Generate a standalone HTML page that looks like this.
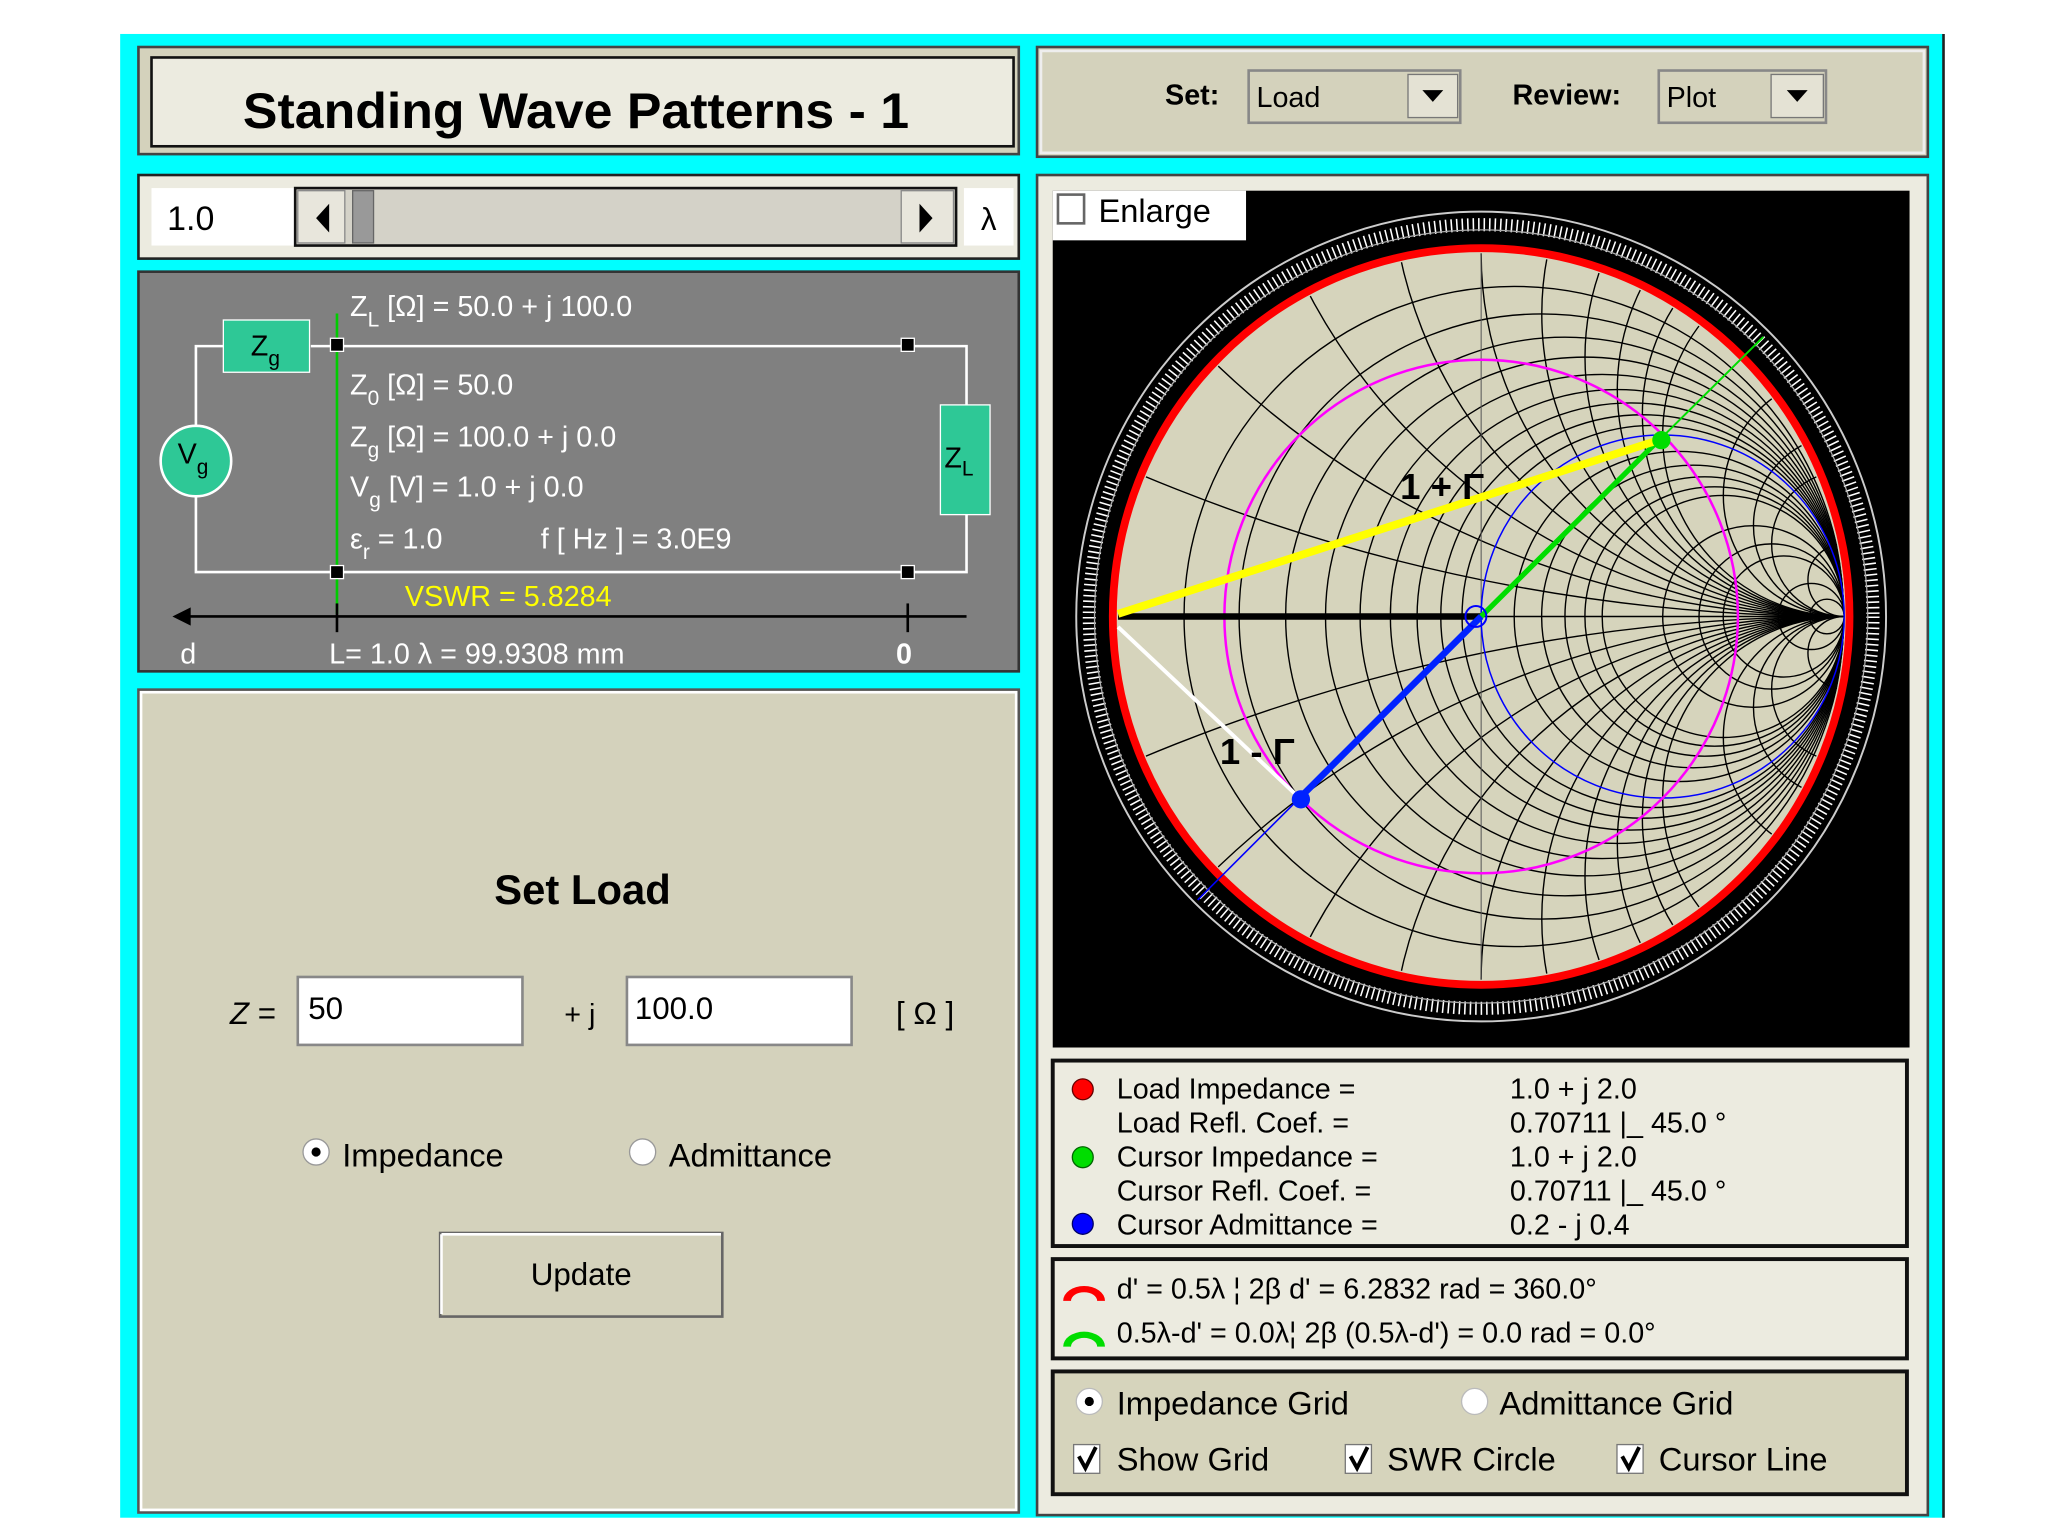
<!DOCTYPE html>
<html><head><meta charset="utf-8"><style>
html,body{margin:0;padding:0;background:#fff;width:2048px;height:1536px;overflow:hidden}
svg{display:block}
text{font-family:"Liberation Sans",sans-serif}
</style></head><body>
<svg width="2048" height="1536" viewBox="0 0 1568 1176" xmlns="http://www.w3.org/2000/svg">
<defs>
<clipPath id="uc"><circle cx="0" cy="0" r="1"/></clipPath>
</defs>
<rect x="0" y="0" width="1568" height="1176" fill="#fff"/>
<rect x="92" y="26" width="1396" height="1136" fill="#00ffff"/>
<line x1="1488" y1="26" x2="1488" y2="1162" stroke="#222" stroke-width="2"/>

<!-- Title panel -->
<rect x="106" y="36" width="674" height="82" fill="#d4d2bc" stroke="#444" stroke-width="2"/>
<rect x="116" y="44" width="660" height="68" fill="#ecebe0" stroke="#111" stroke-width="2"/>
<text x="441" y="98" font-size="38" font-weight="bold" text-anchor="middle" textLength="510" lengthAdjust="spacingAndGlyphs">Standing Wave Patterns - 1</text>

<!-- slider panel -->
<rect x="106" y="134" width="674" height="64" fill="#ecebe0" stroke="#222" stroke-width="2"/>
<rect x="116" y="144" width="110" height="44" fill="#fff"/>
<text x="128" y="176" font-size="26">1.0</text>
<rect x="226" y="144" width="506" height="44" fill="#d4d2c8" stroke="#111" stroke-width="2"/>
<rect x="228" y="146" width="36" height="40" fill="#e8e6dc" stroke="#888"/>
<polygon points="252,156 252,178 242,167" fill="#000"/>
<rect x="270" y="146" width="16" height="40" fill="#999" stroke="#666"/>
<rect x="690" y="146" width="40" height="40" fill="#e8e6dc" stroke="#888"/>
<polygon points="704,156 704,178 714,167" fill="#000"/>
<rect x="738" y="144" width="38" height="44" fill="#fff"/>
<text x="757" y="176" font-size="24" text-anchor="middle">λ</text>

<!-- circuit panel -->
<rect x="106" y="208" width="674" height="306" fill="#808080" stroke="#333" stroke-width="2"/>
<g stroke="#fff" stroke-width="2" fill="none">
<polyline points="171,265 150,265 150,330"/>
<polyline points="150,378 150,438 740,438 740,310"/>
<polyline points="238,265 740,265 740,310"/>
</g>
<line x1="258" y1="240" x2="258" y2="470" stroke="#0c0" stroke-width="2"/>
<rect x="171" y="245" width="66" height="40" fill="#2ec896" stroke="#fff" stroke-width="1"/>
<text x="192" y="272" font-size="22" fill="#000">Z<tspan font-size="16" dy="8">g</tspan></text>
<circle cx="150" cy="353" r="27" fill="#2ec896" stroke="#fff" stroke-width="2"/>
<text x="136" y="355" font-size="22" fill="#000">V<tspan font-size="16" dy="8">g</tspan></text>
<rect x="720" y="310" width="38" height="84" fill="#2ec896" stroke="#fff" stroke-width="1"/>
<text x="723" y="358" font-size="22" fill="#000">Z<tspan font-size="16" dy="6">L</tspan></text>
<g fill="#000" stroke="#fff" stroke-width="1">
<rect x="253" y="259" width="10" height="10"/><rect x="690" y="259" width="10" height="10"/>
<rect x="253" y="433" width="10" height="10"/><rect x="690" y="433" width="10" height="10"/>
</g>
<g fill="#fff" font-size="22">
<text x="268" y="242">Z<tspan font-size="16" dy="8">L</tspan><tspan dy="-8"> [Ω] = 50.0 + j 100.0</tspan></text>
<text x="268" y="302">Z<tspan font-size="16" dy="8">0</tspan><tspan dy="-8"> [Ω] = 50.0</tspan></text>
<text x="268" y="342">Z<tspan font-size="16" dy="8">g</tspan><tspan dy="-8"> [Ω] = 100.0 + j 0.0</tspan></text>
<text x="268" y="380">V<tspan font-size="16" dy="8">g</tspan><tspan dy="-8"> [V] = 1.0 + j 0.0</tspan></text>
<text x="268" y="420">ε<tspan font-size="16" dy="8">r</tspan><tspan dy="-8"> = 1.0</tspan></text>
<text x="414" y="420">f [ Hz ] = 3.0E9</text>
<text x="310" y="464" fill="#ffff00">VSWR  = 5.8284</text>
<text x="138" y="508">d</text>
<text x="252" y="508">L= 1.0  λ  = 99.9308 mm</text>
<text x="686" y="508" font-weight="bold">0</text>
</g>
<line x1="140" y1="472" x2="740" y2="472" stroke="#000" stroke-width="2"/>
<polygon points="132,472 146,465 146,479" fill="#000"/>
<line x1="258" y1="462" x2="258" y2="484" stroke="#000" stroke-width="2"/>
<line x1="695" y1="462" x2="695" y2="484" stroke="#000" stroke-width="2"/>

<!-- Set load panel -->
<rect x="106" y="528" width="674" height="630" fill="#d4d2bc" stroke="#555" stroke-width="2"/>
<rect x="108" y="530" width="670" height="626" fill="none" stroke="#fff" stroke-width="2"/>
<text x="446" y="692" font-size="32" font-weight="bold" text-anchor="middle">Set Load</text>
<text x="176" y="784" font-size="24"><tspan font-style="italic">Z</tspan> =</text>
<rect x="228" y="748" width="172" height="52" fill="#fff" stroke="#888" stroke-width="2"/>
<text x="236" y="780" font-size="24">50</text>
<text x="432" y="784" font-size="22">+ j</text>
<rect x="480" y="748" width="172" height="52" fill="#fff" stroke="#888" stroke-width="2"/>
<text x="486" y="780" font-size="24">100.0</text>
<text x="686" y="784" font-size="24">[ Ω ]</text>
<circle cx="242" cy="882" r="10" fill="#fff" stroke="#999"/><circle cx="242" cy="882" r="3.5" fill="#000"/>
<text x="262" y="893" font-size="25">Impedance</text>
<circle cx="492" cy="882" r="10" fill="#fff" stroke="#999"/>
<text x="512" y="893" font-size="25">Admittance</text>
<rect x="337" y="944" width="216" height="64" fill="#d4d2bc" stroke="#666" stroke-width="2"/>
<line x1="338" y1="945" x2="552" y2="945" stroke="#fff" stroke-width="2"/><line x1="338" y1="945" x2="338" y2="1006" stroke="#fff" stroke-width="2"/>
<text x="445" y="984" font-size="24" text-anchor="middle">Update</text>

<!-- right top panel -->
<rect x="794" y="36" width="682" height="84" fill="#d4d2bc" stroke="#444" stroke-width="2"/>
<rect x="797" y="39" width="676" height="78" fill="none" stroke="#eee" stroke-width="2"/>
<text x="892" y="80" font-size="22" font-weight="bold">Set:</text>
<rect x="956" y="54" width="162" height="40" fill="#d4d2bc" stroke="#888" stroke-width="2"/>
<text x="962" y="82" font-size="22">Load</text>
<rect x="1078" y="57" width="38" height="33" fill="#e4e2d4" stroke="#777"/>
<polygon points="1089,69 1105,69 1097,78" fill="#000"/>
<text x="1158" y="80" font-size="22" font-weight="bold">Review:</text>
<rect x="1270" y="54" width="128" height="40" fill="#d4d2bc" stroke="#888" stroke-width="2"/>
<text x="1276" y="82" font-size="22">Plot</text>
<rect x="1356" y="57" width="40" height="33" fill="#e4e2d4" stroke="#777"/>
<polygon points="1368,69 1384,69 1376,78" fill="#000"/>

<!-- smith panel -->
<rect x="794" y="134" width="682" height="1026" fill="#ecebe0" stroke="#444" stroke-width="2"/>
<rect x="806" y="146" width="656" height="656" fill="#000"/>
<rect x="806" y="146" width="148" height="38" fill="#fff"/>
<rect x="810" y="149" width="20" height="22" fill="#fff" stroke="#666" stroke-width="2"/>
<text x="841" y="170" font-size="25">Enlarge</text>

<!-- tick ring -->
<circle cx="1134" cy="472" r="310" fill="none" stroke="#ccc" stroke-width="1.5"/>
<circle cx="1134" cy="472" r="300" fill="none" stroke="#fff" stroke-width="10" stroke-dasharray="1.2 3"/>
<circle cx="1134" cy="472" r="296" fill="none" stroke="#aaa" stroke-width="1"/>
<circle cx="1134" cy="472" r="282" fill="#d6d4bc" stroke="#ff0000" stroke-width="6"/>

<g transform="translate(1134,472) scale(278)">
<g clip-path="url(#uc)" fill="none" stroke="#000" stroke-width="1.4" vector-effect="non-scaling-stroke">
<circle cx=".0909" cy="0" r=".9091" vector-effect="non-scaling-stroke"/>
<circle cx=".1667" cy="0" r=".8333" vector-effect="non-scaling-stroke"/>
<circle cx=".2308" cy="0" r=".7692" vector-effect="non-scaling-stroke"/>
<circle cx=".2857" cy="0" r=".7143" vector-effect="non-scaling-stroke"/>
<circle cx=".3333" cy="0" r=".6667" vector-effect="non-scaling-stroke"/>
<circle cx=".375" cy="0" r=".625" vector-effect="non-scaling-stroke"/>
<circle cx=".4118" cy="0" r=".5882" vector-effect="non-scaling-stroke"/>
<circle cx=".4444" cy="0" r=".5556" vector-effect="non-scaling-stroke"/>
<circle cx=".4737" cy="0" r=".5263" vector-effect="non-scaling-stroke"/>
<circle cx=".5455" cy="0" r=".4545" vector-effect="non-scaling-stroke"/>
<circle cx=".5833" cy="0" r=".4167" vector-effect="non-scaling-stroke"/>
<circle cx=".6154" cy="0" r=".3846" vector-effect="non-scaling-stroke"/>
<circle cx=".6429" cy="0" r=".3571" vector-effect="non-scaling-stroke"/>
<circle cx=".6667" cy="0" r=".3333" vector-effect="non-scaling-stroke"/>
<circle cx=".75" cy="0" r=".25" vector-effect="non-scaling-stroke"/>
<circle cx=".8" cy="0" r=".2" vector-effect="non-scaling-stroke"/>
<circle cx=".8333" cy="0" r=".1667" vector-effect="non-scaling-stroke"/>
<circle cx=".9091" cy="0" r=".0909" vector-effect="non-scaling-stroke"/>
<circle cx=".9524" cy="0" r=".0476" vector-effect="non-scaling-stroke"/>
<circle cx="1" cy="5" r="5" vector-effect="non-scaling-stroke"/><circle cx="1" cy="-5" r="5" vector-effect="non-scaling-stroke"/>
<circle cx="1" cy="2.5" r="2.5" vector-effect="non-scaling-stroke"/><circle cx="1" cy="-2.5" r="2.5" vector-effect="non-scaling-stroke"/>
<circle cx="1" cy="1.667" r="1.667" vector-effect="non-scaling-stroke"/><circle cx="1" cy="-1.667" r="1.667" vector-effect="non-scaling-stroke"/>
<circle cx="1" cy="1.25" r="1.25" vector-effect="non-scaling-stroke"/><circle cx="1" cy="-1.25" r="1.25" vector-effect="non-scaling-stroke"/>
<circle cx="1" cy="1" r="1" vector-effect="non-scaling-stroke"/><circle cx="1" cy="-1" r="1" vector-effect="non-scaling-stroke"/>
<circle cx="1" cy=".833" r=".833" vector-effect="non-scaling-stroke"/><circle cx="1" cy="-.833" r=".833" vector-effect="non-scaling-stroke"/>
<circle cx="1" cy=".714" r=".714" vector-effect="non-scaling-stroke"/><circle cx="1" cy="-.714" r=".714" vector-effect="non-scaling-stroke"/>
<circle cx="1" cy=".625" r=".625" vector-effect="non-scaling-stroke"/><circle cx="1" cy="-.625" r=".625" vector-effect="non-scaling-stroke"/>
<circle cx="1" cy=".556" r=".556" vector-effect="non-scaling-stroke"/><circle cx="1" cy="-.556" r=".556" vector-effect="non-scaling-stroke"/>
<circle cx="1" cy=".5" r=".5" vector-effect="non-scaling-stroke"/><circle cx="1" cy="-.5" r=".5" vector-effect="non-scaling-stroke"/>
<circle cx="1" cy=".333" r=".333" vector-effect="non-scaling-stroke"/><circle cx="1" cy="-.333" r=".333" vector-effect="non-scaling-stroke"/>
<circle cx="1" cy=".25" r=".25" vector-effect="non-scaling-stroke"/><circle cx="1" cy="-.25" r=".25" vector-effect="non-scaling-stroke"/>
<circle cx="1" cy=".2" r=".2" vector-effect="non-scaling-stroke"/><circle cx="1" cy="-.2" r=".2" vector-effect="non-scaling-stroke"/>
<circle cx="1" cy=".1" r=".1" vector-effect="non-scaling-stroke"/><circle cx="1" cy="-.1" r=".1" vector-effect="non-scaling-stroke"/>
<line x1="-1" y1="0" x2="1" y2="0" vector-effect="non-scaling-stroke"/>
</g>
<line x1="0" y1="-1" x2="0" y2="1" stroke="#555" stroke-width="1" vector-effect="non-scaling-stroke"/>
<circle cx=".5" cy="0" r=".5" fill="none" stroke="#0000ff" stroke-width="1.5" vector-effect="non-scaling-stroke"/>
<circle cx="0" cy="0" r=".7071" fill="none" stroke="#ff00ff" stroke-width="2.5" vector-effect="non-scaling-stroke"/>
</g>
<line x1="856" y1="480" x2="995" y2="611" stroke="#fff" stroke-width="3"/>
<line x1="856" y1="472" x2="1134" y2="472" stroke="#000" stroke-width="5"/>
<line x1="1134" y1="472" x2="1350" y2="258" stroke="#00dd00" stroke-width="1.5"/>
<line x1="1134" y1="472" x2="1273" y2="334" stroke="#00dd00" stroke-width="4"/>
<line x1="1134" y1="472" x2="917" y2="689" stroke="#0000ff" stroke-width="1.2"/>
<line x1="1134" y1="472" x2="995" y2="611" stroke="#0022ff" stroke-width="5"/>
<line x1="856" y1="470" x2="1273" y2="336" stroke="#ffff00" stroke-width="6"/>
<circle cx="1130" cy="472" r="8" fill="none" stroke="#0000ff" stroke-width="1.5"/>
<circle cx="1272" cy="337" r="7" fill="#00dd00"/>
<circle cx="996" cy="612" r="7" fill="#0022ff"/>
<text x="1072" y="382" font-size="28" font-weight="bold" font-family="Liberation Serif">1 + Γ</text>
<text x="934" y="585" font-size="28" font-weight="bold" font-family="Liberation Serif">1 - Γ</text>

<!-- info box -->
<rect x="806" y="812" width="654" height="142" fill="#ecebe0" stroke="#111" stroke-width="3"/>
<g font-size="22">
<circle cx="829" cy="834" r="8" fill="#ff0000" stroke="#600"/>
<circle cx="829" cy="886" r="8" fill="#00dd00" stroke="#060"/>
<circle cx="829" cy="937" r="8" fill="#0000ff" stroke="#006"/>
<text x="855" y="841">Load Impedance =</text><text x="1156" y="841">1.0 + j 2.0</text>
<text x="855" y="867">Load Refl. Coef. =</text><text x="1156" y="867">0.70711   |_ 45.0 °</text>
<text x="855" y="893">Cursor Impedance =</text><text x="1156" y="893">1.0 + j 2.0</text>
<text x="855" y="919">Cursor Refl. Coef. =</text><text x="1156" y="919">0.70711   |_ 45.0 °</text>
<text x="855" y="945">Cursor Admittance =</text><text x="1156" y="945">0.2 - j 0.4</text>
</g>
<rect x="806" y="964" width="654" height="76" fill="#ecebe0" stroke="#111" stroke-width="3"/>
<path d="M814,996 A14,10 0 0 1 846,996 L840,996 A9,6 0 0 0 820,996 Z" fill="#ff0000"/>
<path d="M814,1031 A14,10 0 0 1 846,1031 L840,1031 A9,6 0 0 0 820,1031 Z" fill="#00dd00"/>
<text x="855" y="994" font-size="22">d' = 0.5λ ¦ 2β d' = 6.2832 rad = 360.0°</text>
<text x="855" y="1028" font-size="22">0.5λ-d' = 0.0λ¦ 2β (0.5λ-d') = 0.0 rad = 0.0°</text>
<rect x="806" y="1050" width="654" height="94" fill="#d6d4bc" stroke="#111" stroke-width="3"/>
<g font-size="25">
<circle cx="834" cy="1073" r="10" fill="#fff" stroke="#bbb"/><circle cx="834" cy="1073" r="3.5" fill="#000"/>
<text x="855" y="1083">Impedance Grid</text>
<circle cx="1129" cy="1073" r="10" fill="#fff" stroke="#bbb"/>
<text x="1148" y="1083">Admittance Grid</text>
<rect x="822" y="1106" width="20" height="22" fill="#fff" stroke="#777"/><path d="M826,1115 L831,1124 L839,1108" stroke="#000" stroke-width="3" fill="none"/>
<text x="855" y="1126">Show Grid</text>
<rect x="1030" y="1106" width="20" height="22" fill="#fff" stroke="#777"/><path d="M1034,1115 L1039,1124 L1047,1108" stroke="#000" stroke-width="3" fill="none"/>
<text x="1062" y="1126">SWR Circle</text>
<rect x="1238" y="1106" width="20" height="22" fill="#fff" stroke="#777"/><path d="M1242,1115 L1247,1124 L1255,1108" stroke="#000" stroke-width="3" fill="none"/>
<text x="1270" y="1126">Cursor Line</text>
</g>
</svg>
</body></html>
